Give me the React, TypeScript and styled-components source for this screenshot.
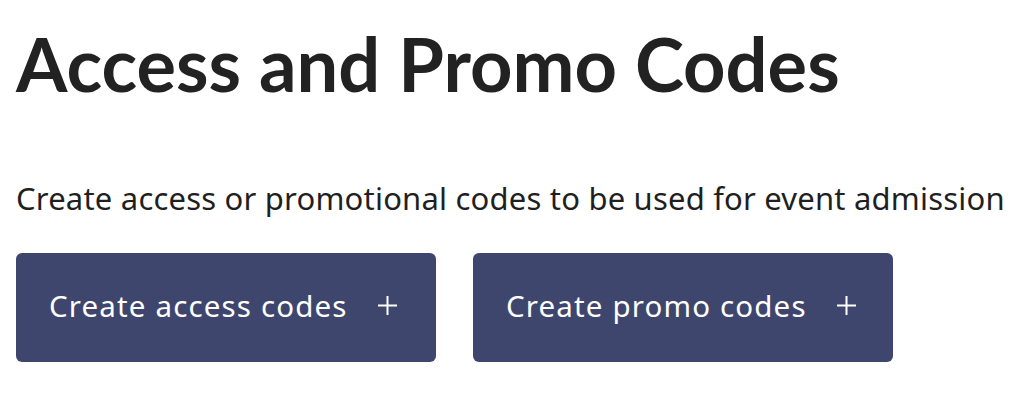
import React from "react";
import styled, { createGlobalStyle } from "styled-components";

const GlobalStyle = createGlobalStyle`
	body {
		margin: 0;
		background: #ffffff;
		font-family: "Noto Sans", sans-serif;
	}
`;

const Page = styled.div`
	display: flex;
	flex-direction: column;
	padding: 14px 16px 0 16px;
`;

const Title = styled.h1`
	margin: 0;
	font-family: "Lato", sans-serif;
	font-weight: 700;
	font-size: 74px;
	line-height: 100px;
	color: #222222;
`;

const Description = styled.p`
	margin: 64px 0 0 0;
	font-family: "Noto Sans", sans-serif;
	font-size: 31px;
	letter-spacing: 0.2px;
	line-height: 40px;
	color: #1f1f1f;
	white-space: nowrap;
`;

const ButtonRow = styled.div`
	display: flex;
	gap: 37px;
	margin-top: 35px;
`;

const ActionButton = styled.button`
	display: flex;
	align-items: center;
	width: 420px;
	height: 109px;
	padding: 0 0 4px 33px;
	border: none;
	border-radius: 6px;
	background: #3e466e;
	color: #ffffff;
	font-family: "Noto Sans", sans-serif;
	font-size: 29.5px;
	letter-spacing: 1.15px;
	cursor: pointer;
	white-space: nowrap;
`;

const PlusIcon = styled.svg`
	margin-left: 30px;
	flex-shrink: 0;
`;

const Plus = () => (
	<PlusIcon width={19} height={19} viewBox="0 0 19 19">
		<path d="M9.5 0V19M0 9.5H19" stroke="#ffffff" strokeWidth={2} fill="none" />
	</PlusIcon>
);

export default function App() {
	return (
		<>
			<GlobalStyle />
			<Page>
				<Title>Access and Promo Codes</Title>
				<Description>
					Create access or promotional codes to be used for event admission
				</Description>
				<ButtonRow>
					<ActionButton>
						Create access codes
						<Plus />
					</ActionButton>
					<ActionButton>
						Create promo codes
						<Plus />
					</ActionButton>
				</ButtonRow>
			</Page>
		</>
	);
}
